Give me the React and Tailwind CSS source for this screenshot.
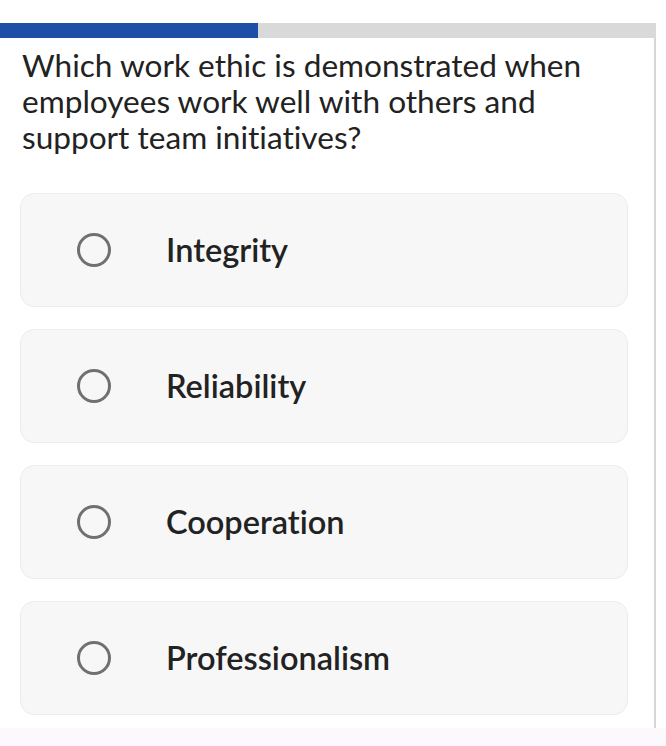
import React from "react";

const options = ["Integrity", "Reliability", "Cooperation", "Professionalism"];

const Option = ({ label }) => (
  <div className="flex h-[114px] items-center rounded-[14px] border border-[#ececec] bg-[#f7f7f7]">
    <span className="ml-[56px] h-[34px] w-[34px] shrink-0 rounded-full border-[3.5px] border-[#707070]"></span>
    <span className="ml-[55px] text-[32.5px] font-semibold text-[#222222]">{label}</span>
  </div>
);

export default function App() {
  return (
    <div className="flex h-[746px] w-[666px] flex-col bg-white font-['Lato',sans-serif] [font-variant-ligatures:none]">
      <div className="mt-[23px] flex h-[15px] w-[656px]">
        <div className="w-[258px] bg-[#1e4fa8]"></div>
        <div className="flex-1 bg-[#d9d9d9]"></div>
      </div>
      <div className="flex h-[690px] w-[656px] flex-col border-r-2 border-[#d6d6d6]">
        <h1 className="pl-[22px] pr-[40px] pt-[9px] text-[31.6px] font-normal leading-[36px] text-[#222222]">
          Which work ethic is demonstrated when employees work well with others and support team initiatives?
        </h1>
        <div className="ml-[20px] mt-[38px] flex w-[608px] flex-col gap-[22px]">
          {options.map((o) => (
            <Option key={o} label={o} />
          ))}
        </div>
      </div>
      <div className="flex-1 bg-[#fdf8fc]"></div>
    </div>
  );
}
